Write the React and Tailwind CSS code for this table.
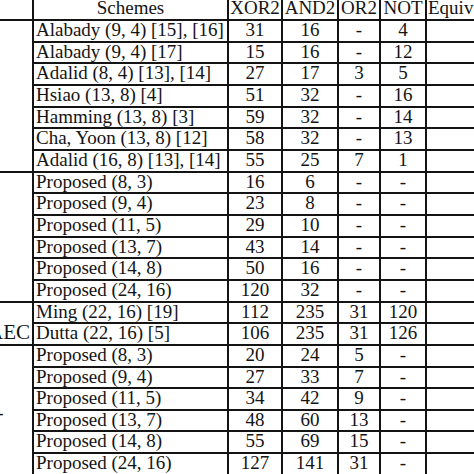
import React from "react";

const rows = [
  ["Alabady (9, 4) [15], [16]", "31", "16", "-", "4"],
  ["Alabady (9, 4) [17]", "15", "16", "-", "12"],
  ["Adalid (8, 4) [13], [14]", "27", "17", "3", "5"],
  ["Hsiao (13, 8) [4]", "51", "32", "-", "16"],
  ["Hamming (13, 8) [3]", "59", "32", "-", "14"],
  ["Cha, Yoon (13, 8) [12]", "58", "32", "-", "13"],
  ["Adalid (16, 8) [13], [14]", "55", "25", "7", "1"],
  ["Proposed (8, 3)", "16", "6", "-", "-"],
  ["Proposed (9, 4)", "23", "8", "-", "-"],
  ["Proposed (11, 5)", "29", "10", "-", "-"],
  ["Proposed (13, 7)", "43", "14", "-", "-"],
  ["Proposed (14, 8)", "50", "16", "-", "-"],
  ["Proposed (24, 16)", "120", "32", "-", "-"],
  ["Ming (22, 16) [19]", "112", "235", "31", "120"],
  ["Dutta (22, 16) [5]", "106", "235", "31", "126"],
  ["Proposed (8, 3)", "20", "24", "5", "-"],
  ["Proposed (9, 4)", "27", "33", "7", "-"],
  ["Proposed (11, 5)", "34", "42", "9", "-"],
  ["Proposed (13, 7)", "48", "60", "13", "-"],
  ["Proposed (14, 8)", "55", "69", "15", "-"],
  ["Proposed (24, 16)", "127", "141", "31", "-"],
];

const cell = "border-r-2 border-b-2 border-[#141414]";
const num = cell + " text-center leading-[17px] whitespace-nowrap";

export default function App() {
  const cells = [];
  rows.forEach((r, i) => {
    const rowStart = i + 2;
    if (i === 0) {
      cells.push(
        <div key="g1" className={cell} style={{ gridColumn: 1, gridRow: `${rowStart} / span 7` }} />
      );
    }
    if (i === 7) {
      cells.push(
        <div key="g2" className={cell} style={{ gridColumn: 1, gridRow: `${rowStart} / span 6` }} />
      );
    }
    if (i === 13) {
      cells.push(
        <div key="g3" className={cell + " flex flex-col"} style={{ gridColumn: 1, gridRow: `${rowStart} / span 2` }}>
          <div className="h-[21.667px] shrink-0" />
          <div className="flex justify-end pr-[2px] text-[21px] leading-[17px] whitespace-nowrap">
            <span>DAEC</span>
          </div>
        </div>
      );
    }
    if (i === 15) {
      cells.push(
        <div key="g4" className={cell + " flex items-center"} style={{ gridColumn: 1, gridRow: `${rowStart} / span 6` }}>
          <div className="w-[3.5px] flex justify-end leading-[17px] whitespace-nowrap pt-[5px]">
            <span>TAEC-</span>
          </div>
        </div>
      );
    }
    cells.push(
      <div key={"s" + i} className={cell + " pl-[2px] leading-[17px] whitespace-nowrap overflow-hidden"}>
        {r[0]}
      </div>
    );
    for (let c = 1; c < 5; c++) {
      cells.push(
        <div key={"c" + i + "-" + c} className={num}>
          {r[c]}
        </div>
      );
    }
    cells.push(<div key={"e" + i} className={cell} />);
  });

  return (
    <div
      className="w-[474px] h-[474px] overflow-hidden bg-white text-[#141414] text-[19px]"
      style={{ fontFamily: '"Liberation Serif", "Times New Roman", serif' }}
    >
      <div className="grid w-[560px] grid-cols-[34px_195px_54px_56px_42px_46px_133px] grid-rows-[21px_repeat(21,21.667px)]">
        <div className={cell} />
        <div className={cell + " text-center leading-[16px]"}>Schemes</div>
        <div className={cell + " text-center leading-[16px] whitespace-nowrap"}>XOR2</div>
        <div className={cell + " text-center leading-[16px] whitespace-nowrap"}>AND2</div>
        <div className={cell + " text-center leading-[16px] whitespace-nowrap"}>OR2</div>
        <div className={cell + " text-center leading-[16px] whitespace-nowrap"}>NOT</div>
        <div className={cell + " pl-[1px] leading-[16px] whitespace-nowrap"}>Equivalent</div>
        {cells}
      </div>
    </div>
  );
}
